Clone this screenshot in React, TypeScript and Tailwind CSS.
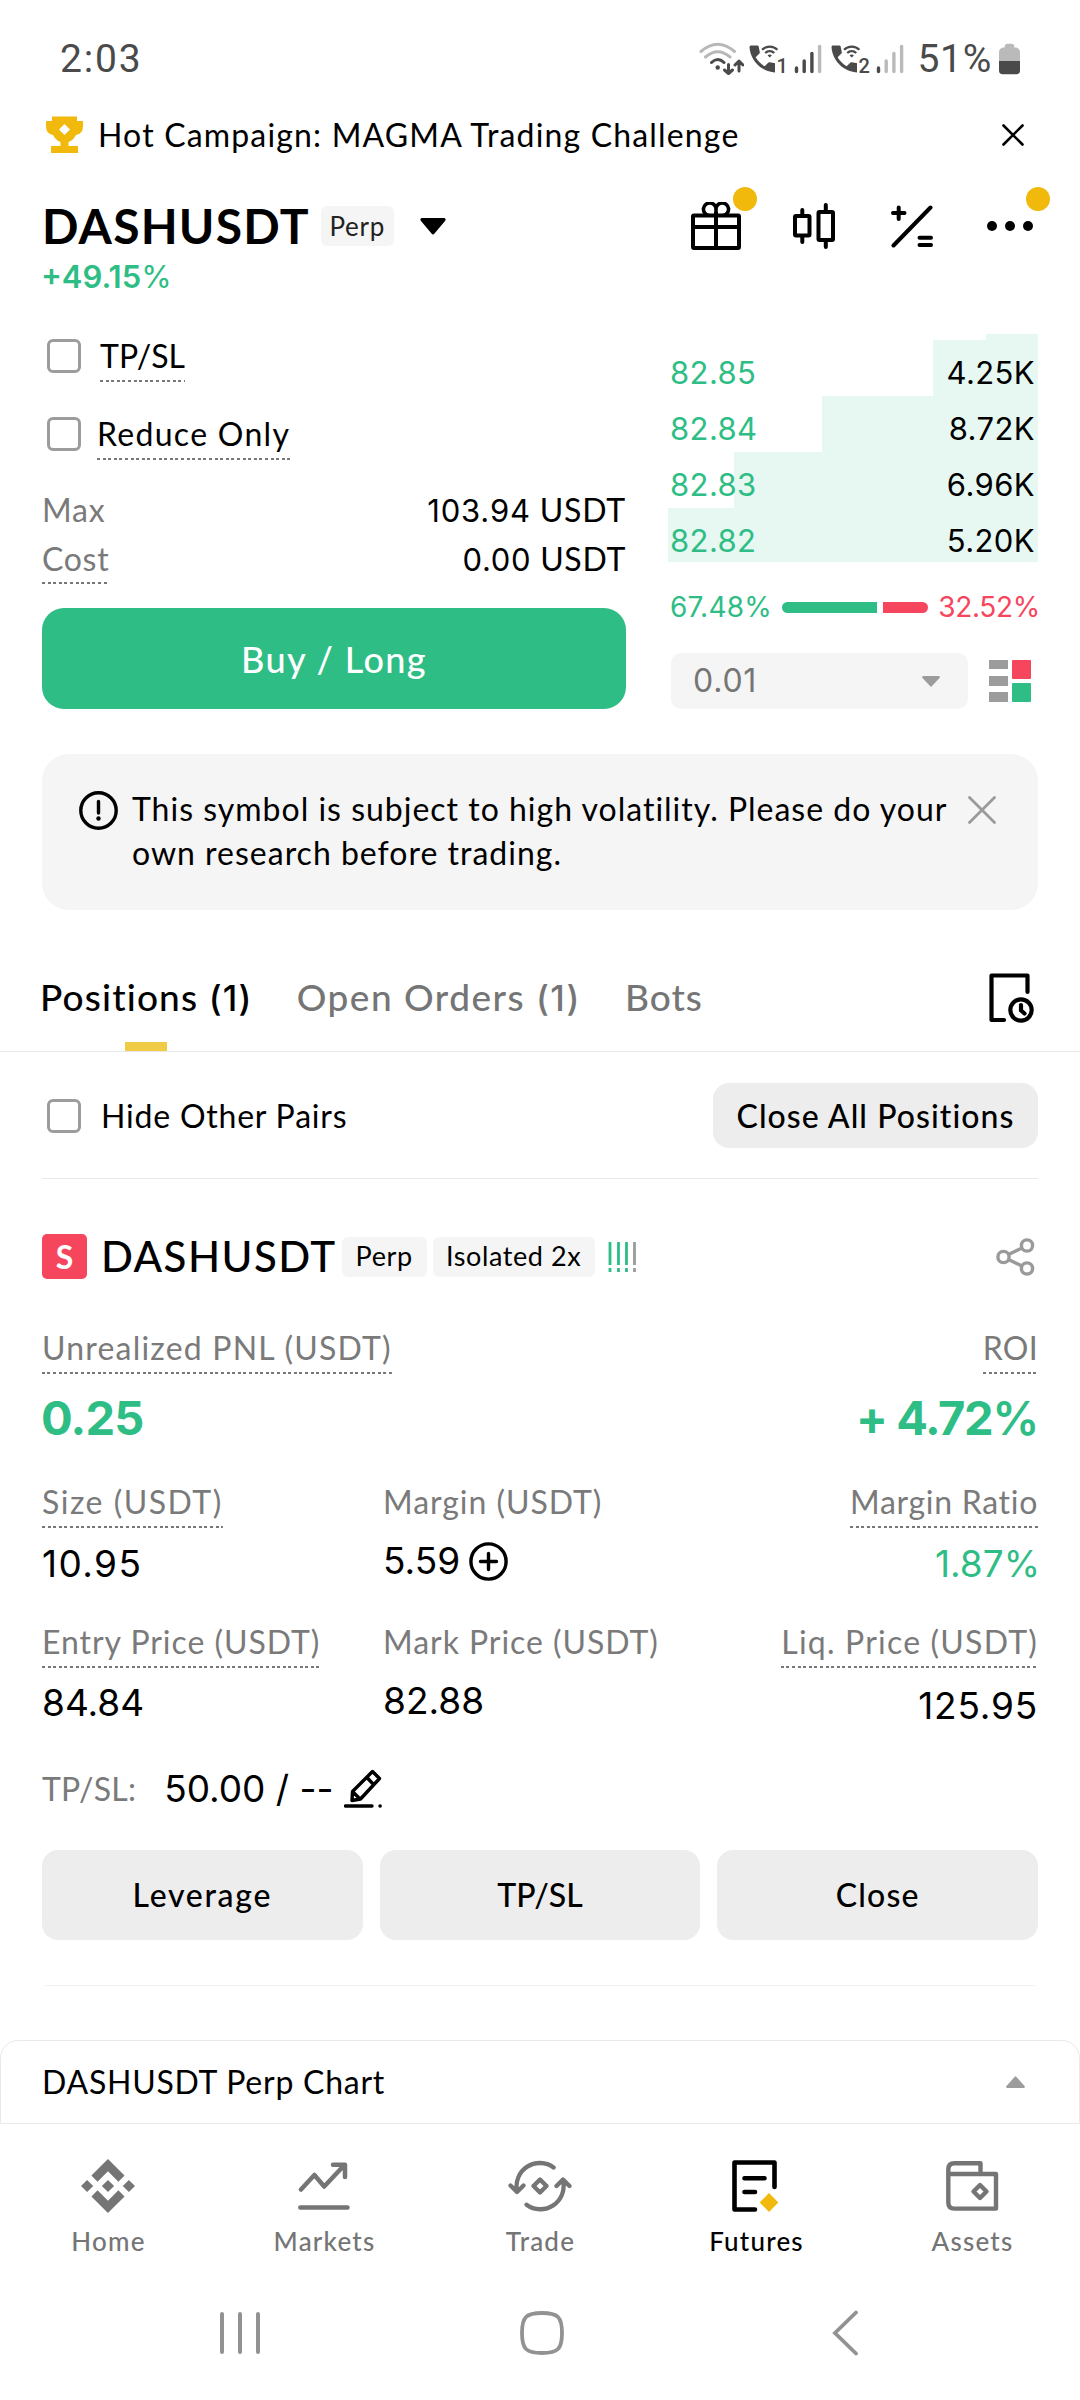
import React, { useState } from 'react';
import { MdWifiCalling3 } from 'react-icons/md';
import { SiBinance } from 'react-icons/si';

const dashed =
  'bg-[repeating-linear-gradient(90deg,#777_0_3px,transparent_3px_5.6px)] bg-[length:100%_2px] bg-bottom bg-no-repeat';
const num = "font-['Inter','Liberation_Sans',sans-serif]";

const bids = [
  { price: '82.85', amount: '4.25K', depth: 105 },
  { price: '82.84', amount: '8.72K', depth: 216 },
  { price: '82.83', amount: '6.96K', depth: 304 },
  { price: '82.82', amount: '5.20K', depth: 370 },
];

const Signal: React.FC<{ active: number }> = ({ active }) => (
  <svg width="28" height="30" viewBox="0 0 28 30" strokeWidth="3.4" strokeLinecap="round">
    {[24, 17, 9.5, 2.5].map((top, i) => (
      <path key={i} d={`M${2.5 + i * 7.7} ${top}V27.5`} stroke={i < active ? '#4a4a4a' : '#bababa'} />
    ))}
  </svg>
);

const WifiCall: React.FC<{ sim: string }> = ({ sim }) => (
  <div className="relative h-9 w-[42px] text-[#4a4a4a]">
    <MdWifiCalling3 className="absolute -left-1 top-0 size-9" />
    <span className="absolute bottom-[3px] left-[26px] bg-white pl-px text-[20px] leading-[15px] font-medium">{sim}</span>
  </div>
);

const StatusBar: React.FC = () => (
  <div className="flex h-[104px] items-center pt-[14px] pr-[60px] pl-[60px] font-['Roboto',sans-serif] text-[39px] text-[#4a4a4a]">
    <span className="tracking-[1.8px]">2:03</span>
    <div className="ml-auto flex items-center">
      <svg width="45" height="34" viewBox="0 0 45 34" fill="none" strokeWidth="3" strokeLinecap="round" strokeLinejoin="round">
        <path d="M2 9.5Q18.7 -5 35.5 9.5M6.5 15Q18.7 4.5 31 15" stroke="#b8b8b8" />
        <path d="M12.5 20.5Q18.7 14.5 25 20.5M29.5 22.5V31M25.5 28L29.5 31.5L33.5 28M40 29V20M36 23L40 19L44 23" stroke="#4a4a4a" />
        <circle cx="18.7" cy="25.5" r="2.2" fill="#4a4a4a" />
      </svg>
      <div className="ml-[5px]"><WifiCall sim="1" /></div>
      <div className="ml-[3px]"><Signal active={3} /></div>
      <div className="ml-[9px]"><WifiCall sim="2" /></div>
      <div className="ml-[3px]"><Signal active={1} /></div>
      <span className="ml-[13px] tracking-[0.7px]">51%</span>
      <svg className="ml-[7px]" width="21" height="32" viewBox="0 0 22 32">
        <path d="M6 3Q6 0 9 0H13Q16 0 16 3V4H18Q22 5 22 9V18H0V9Q0 5 4 4H6Z" fill="#bababa" />
        <path d="M0 18H22V28Q22 32 18 32H4Q0 32 0 28Z" fill="#4a4a4a" />
      </svg>
    </div>
  </div>
);

const CampaignBar: React.FC = () => (
  <div className="flex h-[62px] items-center pr-[56px] pl-[46px]">
    <svg className="-mt-[2px]" width="37" height="37" viewBox="0 0 37 37" fill="#f0b90b">
      <path
        fillRule="evenodd"
        d="M6 .5H31V5H37V10Q37 18 30 19Q27 24.500 22.500 26V30H32V37H5V30H14.500V26Q10 24.500 7 19Q0 18 0 10V5H6ZM18.500 8L13 13.500L18.500 19L24 13.500Z"
      />
    </svg>
    <span className="ml-[15px] text-[32px] tracking-[1.17px]">Hot Campaign: MAGMA Trading Challenge</span>
    <svg className="ml-auto" width="22" height="22" viewBox="0 0 22 22" stroke="#000" strokeWidth="2.6" strokeLinecap="round">
      <path d="M1.500 1.500L20.500 20.500M20.500 1.500L1.500 20.500" />
    </svg>
  </div>
);

const SymbolHeader: React.FC = () => (
  <div className="h-[122px] px-[42px] pt-[20px]">
    <div className="flex h-[80px] items-center">
      <h1 className="text-[48px] font-bold tracking-[1.2px]">DASHUSDT</h1>
      <span className="ml-[11px] flex h-10 w-[73px] items-center justify-center rounded-md bg-[#f5f5f5] text-[26px] tracking-[0.7px] text-[#222]">Perp</span>
      <svg className="ml-[26px]" width="26" height="17" viewBox="0 0 26 17">
        <path d="M1.500 0H24.500Q26.500 1 25 3L14.500 15.500Q13 17.500 11.500 15.500L1 3Q-.5 1 1.500 0Z" />
      </svg>
      <div className="ml-auto flex items-center pr-[5px]">
        <div className="relative">
          <svg width="50" height="48" viewBox="0 0 50 48" fill="none" stroke="#000" strokeWidth="4" strokeLinejoin="round">
            <rect x="2" y="13.500" width="46" height="32.500" rx="1" />
            <path d="M2 25H48M25 10V46" />
            <path d="M25 13V8A6.300 6.300 0 1 0 18 13.500M25 13V8A6.300 6.300 0 1 1 32 13.500" strokeWidth="3.600" />
          </svg>
          <span className="absolute -top-[15px] left-[42px] size-[24px] rounded-full bg-[#f0b90b]" />
        </div>
        <svg className="ml-[52px]" width="42" height="46" viewBox="0 0 42 46" fill="none" stroke="#000" strokeWidth="4" strokeLinecap="round">
          <rect x="2" y="13" width="14.500" height="19.500" rx="1" />
          <rect x="25.500" y="9" width="14.500" height="28" rx="1" />
          <path d="M9.300 7V12M9.300 33V39M32.800 2V8M32.800 38V44" />
        </svg>
        <svg className="ml-[56px]" width="42" height="43" viewBox="0 0 42 43" fill="none" stroke="#000" strokeWidth="4" strokeLinecap="round">
          <path d="M39.500 2.500L2.500 40.500M7.700 2.500V14M2 8H13.500M28.500 32.700H40M28.500 40H40" />
        </svg>
        <div className="relative ml-[54px]">
          <svg width="46" height="10" viewBox="0 0 46 10">
            <circle cx="5" cy="5" r="5" />
            <circle cx="23" cy="5" r="5" />
            <circle cx="41" cy="5" r="5" />
          </svg>
          <span className="absolute -top-[34px] left-[39px] size-[24px] rounded-full bg-[#f0b90b]" />
        </div>
      </div>
    </div>
    <div className={`${num} -ml-px h-[22px] text-[31px] leading-[22px] font-semibold text-[#2ebd85]`}>
      +49.15<span className="font-normal">%</span>
    </div>
  </div>
);

const Checkbox: React.FC<{ checked: boolean; onChange: () => void }> = ({ checked, onChange }) => (
  <button
    role="checkbox"
    aria-checked={checked}
    onClick={onChange}
    className="size-[34px] shrink-0 rounded-[6px] border-[3px] border-[#9c9c9c]"
  />
);

const OrderForm: React.FC = () => {
  const [tpsl, setTpsl] = useState(false);
  const [reduceOnly, setReduceOnly] = useState(false);

  return (
    <div className="w-[584px] pt-[45px] text-[32px]">
      <div className="flex h-[49px] items-start pl-[5px]">
        <div className="flex pt-[6px]"><Checkbox checked={tpsl} onChange={() => setTpsl(!tpsl)} /></div>
        <span className={`ml-[19px] h-[49px] leading-[46px] ${dashed}`}>TP/SL</span>
      </div>
      <div className="mt-[29px] flex h-[49px] items-start pl-[5px]">
        <div className="flex pt-[6px]"><Checkbox checked={reduceOnly} onChange={() => setReduceOnly(!reduceOnly)} /></div>
        <span className={`ml-[16px] h-[49px] leading-[46px] tracking-[1.3px] ${dashed}`}>Reduce Only</span>
      </div>
      <div className="mt-[26px] flex h-[49px] justify-between leading-[48px] tracking-[0.8px]">
        <span className="text-[#7a7a7a]">Max</span>
        <span><span className={`${num} text-[31px]`}>103.94</span> USDT</span>
      </div>
      <div className="flex h-[49px] justify-between leading-[48px] tracking-[0.7px]">
        <span className={`text-[#7a7a7a] ${dashed}`}>Cost</span>
        <span><span className={`${num} text-[31px]`}>0.00</span> USDT</span>
      </div>
      <button className="mt-[24px] h-[101px] w-full rounded-[22px] bg-[#2ebd85] text-[36px] font-medium tracking-[1.35px] text-white">Buy / Long</button>
    </div>
  );
};

const OrderBook: React.FC = () => (
  <div className="w-[370px] pt-[46px]">
    <div className="ml-auto h-[6px] w-[52px] bg-[#e7f7f1]" />
    <div className="h-[222px] overflow-hidden">
      {bids.map((bid) => (
        <div key={bid.price} className={`${num} relative flex h-[56px] justify-between pr-[3px] pl-[2px] pt-[9px] text-[31px] leading-[48px] tracking-[0.4px]`}>
          <div className="absolute inset-y-0 right-0 bg-[#e7f7f1]" style={{ width: bid.depth }} />
          <span className="relative text-[#2ebd85]">{bid.price}</span>
          <span className="relative">{bid.amount}</span>
        </div>
      ))}
    </div>
    <div className={`${num} mt-[24px] -mr-[2px] flex h-[42px] items-center pl-[2px] text-[28px] tracking-[0.2px]`}>
      <span className="text-[#2ebd85]">67.48%</span>
      <div className="mr-[10px] ml-[10px] flex grow gap-[6px]">
        <div className="h-[11px] grow-[67.48] rounded-l-full bg-[#2ebd85]" />
        <div className="h-[11px] grow-[32.52] rounded-r-full bg-[#f6465d]" />
      </div>
      <span className="tracking-[-0.3px] text-[#f6465d]">32.52%</span>
    </div>
    <div className="mt-[25px] flex items-center pl-[3px]">
      <button className={`${num} flex h-[56px] w-[297px] items-center justify-between rounded-[10px] bg-[#f5f5f5] pr-[28px] pl-[22px] text-[32px] tracking-[0.8px] text-[#757575]`}>
        0.01
        <svg width="18" height="11" viewBox="0 0 18 11" fill="#9c9c9c">
          <path d="M1 0H17Q18.500 .5 17.500 2L10 10Q9 11.500 8 10L.5 2Q-.5 .5 1 0Z" />
        </svg>
      </button>
      <svg className="ml-[21px]" width="42" height="42" viewBox="0 0 42 42">
        <path d="M0 0H19V9H0ZM0 16H19V26H0ZM0 32H19V42H0Z" fill="#9c9c9c" />
        <rect x="23" width="19" height="19" rx="1" fill="#f6465d" />
        <rect x="23" y="23" width="19" height="19" rx="1" fill="#2ebd85" />
      </svg>
    </div>
  </div>
);

const VolatilityNotice: React.FC = () => (
  <div className="mx-[42px] mt-[45px] flex h-[156px] items-start rounded-[27px] bg-[#f5f5f5] pt-[33px] pr-[42px] pl-[37px]">
    <svg className="mt-[4px] shrink-0" width="39" height="39" viewBox="0 0 39 39" fill="none" stroke="#000" strokeWidth="3.400">
      <circle cx="19.500" cy="19.500" r="17.700" />
      <path d="M19.500 10.500V22" strokeLinecap="round" />
      <circle cx="19.500" cy="27.500" r="2.200" fill="#000" stroke="none" />
    </svg>
    <p className="ml-[14px] w-[830px] text-[32px] leading-[44px] tracking-[1px]">
      This symbol is subject to high volatility. Please do your
      <br />
      own research before trading.
    </p>
    <svg className="mt-[9px] ml-auto shrink-0" width="28" height="28" viewBox="0 0 28 28" stroke="#9a9a9a" strokeWidth="2.800" strokeLinecap="round">
      <path d="M1.500 1.500L26.500 26.500M26.500 1.500L1.500 26.500" />
    </svg>
  </div>
);

const tabs = [
  { label: 'Positions', count: '(1)', spacing: 'tracking-[1.15px]' },
  { label: 'Open Orders', count: '(1)', spacing: 'tracking-[1.5px]' },
  { label: 'Bots', count: '', spacing: 'tracking-[1px]' },
];

const TabBar: React.FC = () => {
  const [active, setActive] = useState('Positions');

  return (
    <div className="mt-[45px] flex h-[97px] border-b border-[#e9e9e9] pr-[46px] pl-[40px]">
      {tabs.map((tab) => (
        <button
          key={tab.label}
          onClick={() => setActive(tab.label)}
          className={`mr-[44px] flex flex-col items-center text-[37px] font-medium ${tab.spacing} ${active === tab.label ? 'text-black' : 'text-[#757575]'}`}
        >
          <span className="h-[87px] leading-[84px]">
            {tab.label}
            {tab.count && <span className={`${num} text-[35px]`}> {tab.count}</span>}
          </span>
          {active === tab.label && <span className="h-[9px] w-[42px] bg-[#f0cb45]" />}
        </button>
      ))}
      <svg className="mt-[18px] ml-auto" width="46" height="50" viewBox="0 0 46 50" fill="none" stroke="#000" strokeWidth="4.200" strokeLinecap="round" strokeLinejoin="round">
        <path d="M39.500 19V2.500H3.500V47H16M33 32V37.500L36.500 40.500" />
        <circle cx="33" cy="37" r="10.700" />
      </svg>
    </div>
  );
};

const Cell: React.FC<{
  label: string;
  underline?: boolean;
  className?: string;
  spacing?: string;
  valueClass?: string;
  children: React.ReactNode;
}> = ({ label, underline = true, className = 'items-start', spacing = 'tracking-[0.95px]', valueClass = 'mt-[10px]', children }) => (
  <div className={`flex h-[109px] flex-col ${className}`}>
    <span className={`h-[49px] shrink-0 text-[32px] leading-[46px] text-[#7a7a7a] ${spacing} ${underline ? dashed : ''}`}>{label}</span>
    <div className={`${num} flex h-[50px] shrink-0 items-center text-[37px] ${valueClass}`}>{children}</div>
  </div>
);

const actions = [
  { label: 'Leverage', spacing: 'tracking-[1.7px]' },
  { label: 'TP/SL', spacing: 'tracking-normal' },
  { label: 'Close', spacing: 'tracking-[1.2px]' },
];

const PositionCard: React.FC = () => (
  <div className="px-[42px]">
    <div className="mt-[54px] flex h-[45px] items-center">
      <span className="flex size-[45px] items-center justify-center rounded-[5px] bg-[#f6465d] text-[32px] font-bold text-white">S</span>
      <h2 className="ml-[14px] text-[42px] font-medium tracking-[1.45px]">DASHUSDT</h2>
      <span className="ml-[5px] flex h-10 w-[85px] items-center justify-center rounded-md bg-[#f5f5f5] text-[27px] tracking-[0.7px]">Perp</span>
      <span className="ml-[6px] flex h-10 w-[162px] items-center justify-center rounded-md bg-[#f5f5f5] text-[27px] tracking-[0.6px]">Isolated 2x</span>
      <svg className="ml-[13px]" width="30" height="30" viewBox="0 0 30 30" strokeWidth="2.800">
        <path d="M2 0V23M2 26V30M10.500 0V23M10.500 26V30M18.500 0V23M18.500 26V30" stroke="#2ebd85" />
        <path d="M26.500 0V23M26.500 26V30" stroke="#9c9c9c" />
      </svg>
      <svg className="mr-[3px] ml-auto" width="39" height="38" viewBox="0 0 39 38" fill="none" stroke="#9a9a9a" strokeWidth="3.400">
        <circle cx="31" cy="7.500" r="5.600" />
        <circle cx="7.500" cy="19" r="5.600" />
        <circle cx="31" cy="30.500" r="5.600" />
        <path d="M12.500 16.500L26 10M12.500 21.500L26 28" />
      </svg>
    </div>

    <div className="mt-[46px] flex h-[49px] justify-between text-[32px] leading-[46px] text-[#7a7a7a]">
      <span className={`tracking-[1.2px] ${dashed}`}>Unrealized PNL (USDT)</span>
      <span className={`tracking-[0.3px] ${dashed}`}>ROI</span>
    </div>
    <div className={`${num} mt-[12px] flex h-[64px] items-center justify-between text-[47px] font-bold text-[#2ebd85]`}>
      <span className="-ml-px tracking-[-0.8px]">0.25</span>
      <span className="tracking-[-1.4px]">+ 4.72<span className="font-semibold">%</span></span>
    </div>

    <div className="mt-[29px] grid grid-cols-[341px_1fr_1fr] gap-y-[31px]">
      <Cell label="Size (USDT)" spacing="tracking-[1.5px]" valueClass="mt-[11px] tracking-[1.4px]">10.95</Cell>
      <Cell label="Margin (USDT)" underline={false} valueClass="mt-[8px]">
        5.59
        <svg className="ml-[9px]" width="39" height="39" viewBox="0 0 39 39" fill="none" stroke="#000" strokeWidth="3.400">
          <circle cx="19.500" cy="19.500" r="17.600" />
          <path d="M19.500 11.500V27.500M11.500 19.500H27.500" strokeLinecap="round" />
        </svg>
      </Cell>
      <Cell label="Margin Ratio" className="items-end" spacing="tracking-[0.7px]" valueClass="mt-[11px] -mr-[2px] text-[#2ebd85]">1.87%</Cell>
      <Cell label="Entry Price (USDT)">84.84</Cell>
      <Cell label="Mark Price (USDT)" underline={false} valueClass="mt-[8px]">82.88</Cell>
      <Cell label="Liq. Price (USDT)" className="items-end" spacing="tracking-[1.2px]" valueClass="mt-[13px] tracking-[0.8px]">125.95</Cell>
    </div>

    <div className="mt-[35px] flex h-[51px] items-center">
      <span className="text-[32px] tracking-[0.2px] text-[#7a7a7a]">TP/SL:</span>
      <span className={`${num} ml-[28px] text-[37px]`}>50.00 / --</span>
      <svg className="ml-[10px]" width="38" height="39" viewBox="0 0 38 39" fill="none" stroke="#000" strokeWidth="3.400" strokeLinecap="round" strokeLinejoin="round">
        <path d="M28.500 2.500L35.500 9.500L16.500 30L8 31.500L8.500 22.500ZM23 8.500L29.500 15.500M9 23L16 30" />
        <path d="M1.500 37H28M36 37H36.200" />
      </svg>
    </div>

    <div className="mt-[36px] grid grid-cols-3 gap-[17px]">
      {actions.map((action) => (
        <button key={action.label} className={`h-[90px] rounded-[16px] bg-[#ededed] text-[32px] font-medium ${action.spacing}`}>{action.label}</button>
      ))}
    </div>
    <div className="mx-[3px] mt-[45px] h-px bg-[#f2f2f2]" />
  </div>
);

const navItems = [
  { label: 'Home', icon: <SiBinance className="size-[54px]" /> },
  {
    label: 'Markets',
    icon: (
      <svg width="52" height="52" viewBox="0 -2 52 52" fill="none" stroke="currentColor" strokeWidth="4.500" strokeLinecap="round" strokeLinejoin="round">
        <path d="M3 27.500L16.400 13L26.200 24.500L46 3.500M35 2.700H47V15M2.300 45.500H49.500" />
      </svg>
    ),
  },
  {
    label: 'Trade',
    icon: (
      <svg width="64" height="52" viewBox="0 0 64 52" fill="none" stroke="currentColor" strokeWidth="4.300" strokeLinecap="round" strokeLinejoin="round">
        <path d="M45.600 7.500A23.300 23.300 0 0 0 9 31M2.500 25.500L9 32L15.500 25.500M18.500 44.700A23.300 23.300 0 0 0 55 20.500M48.500 26L55 19.500L61.500 26M32 19.500L38.500 26L32 32.500L25.500 26Z" />
      </svg>
    ),
  },
  {
    label: 'Futures',
    icon: (
      <svg width="48" height="52" viewBox="0 0 48 52" fill="none" stroke="currentColor" strokeWidth="4.600" strokeLinecap="round" strokeLinejoin="round">
        <path d="M42.500 27V2.500H2.500V49.500H23M12.500 18.300H32.500M12.500 32H23" />
        <path d="M37 33L46.300 42.500L37 52L27.700 42.500Z" fill="#f0b90b" stroke="none" />
      </svg>
    ),
  },
  {
    label: 'Assets',
    icon: (
      <svg width="53" height="52" viewBox="0 -1 53 52" fill="none" stroke="currentColor" strokeWidth="4.400" strokeLinejoin="round">
        <path d="M34.500 13V2.300H8.500Q2.300 2.300 2.300 8.500V41.500Q2.300 47.600 8.500 47.600H50V13H2.300M34 24L40.500 30.500L34 37L27.500 30.500Z" />
      </svg>
    ),
  },
];

const App: React.FC = () => {
  const [hideOthers, setHideOthers] = useState(false);

  return (
    <div className="h-[2400px] w-[1080px] overflow-hidden bg-white font-['Lato','Liberation_Sans',sans-serif] text-black">
      <StatusBar />
      <CampaignBar />
      <SymbolHeader />
      <div className="flex justify-between px-[42px]">
        <OrderForm />
        <OrderBook />
      </div>
      <VolatilityNotice />
      <TabBar />

      <div className="mx-[42px] border-b border-[#e9e9e9] pt-[31px] pb-[30px]">
        <div className="flex h-[65px] items-center pl-[5px]">
          <Checkbox checked={hideOthers} onChange={() => setHideOthers(!hideOthers)} />
          <span className="ml-[20px] text-[32px] tracking-[0.8px]">Hide Other Pairs</span>
          <button className="ml-auto h-[65px] w-[325px] rounded-[16px] bg-[#ededed] text-[32px] font-medium tracking-[1.05px]">Close All Positions</button>
        </div>
      </div>

      <div className="pt-px">
        <PositionCard />
      </div>

      <div className="mt-[54px] flex h-[84px] items-center justify-between rounded-t-[18px] border border-[#e9e9e9] pr-[54px] pl-[41px] text-[32px] tracking-[0.75px]">
        DASHUSDT Perp Chart
        <svg width="19" height="12" viewBox="0 0 19 12" fill="#9c9c9c">
          <path d="M1 12H18Q19.500 11.500 18.500 10L10.500 1Q9.500 -.5 8.500 1L.5 10Q-.5 11.500 1 12Z" />
        </svg>
      </div>

      <div className="grid grid-cols-5 pt-[30px]">
        {navItems.map((item) => (
          <div key={item.label} className={`flex flex-col items-center ${item.label === 'Futures' ? 'text-black' : 'text-[#757575]'}`}>
            <div className="flex h-16 items-center">{item.icon}</div>
            <span className="mt-[8px] pl-px text-[26px] leading-[30px] font-medium tracking-[1.2px]">{item.label}</span>
          </div>
        ))}
      </div>

      <div className="mt-[54px] flex h-[46px] items-center pl-[219px] text-[#929292]">
        <svg width="42" height="44" viewBox="0 0 42 44" stroke="currentColor" strokeWidth="4" strokeLinecap="round">
          <path d="M3 3V41M21 3V41M39 3V41" />
        </svg>
        <svg className="ml-[259px]" width="44" height="44" viewBox="0 0 44 44" fill="none" stroke="currentColor" strokeWidth="3.800">
          <path d="M22 2C38 2 42 6 42 22S38 42 22 42S2 38 2 22S6 2 22 2Z" />
        </svg>
        <svg className="ml-[268px]" width="27" height="46" viewBox="0 0 27 46" fill="none" stroke="currentColor" strokeWidth="3.800" strokeLinecap="round">
          <path d="M24 2.500L3 23L24 43.500" />
        </svg>
      </div>
    </div>
  );
};

export default App;
